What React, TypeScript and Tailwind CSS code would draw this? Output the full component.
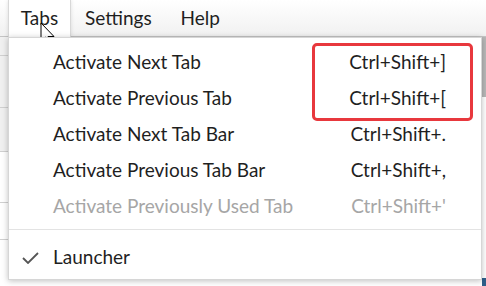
import React from 'react';

const items = [
  { label: 'Activate Next Tab', keys: 'Ctrl+Shift+]' },
  { label: 'Activate Previous Tab', keys: 'Ctrl+Shift+[' },
  { label: 'Activate Next Tab Bar', keys: 'Ctrl+Shift+.' },
  { label: 'Activate Previous Tab Bar', keys: 'Ctrl+Shift+,' },
  { label: 'Activate Previously Used Tab', keys: "Ctrl+Shift+'", disabled: true },
];

function Cursor() {
  return (
    <svg width="18" height="26" viewBox="0 0 18 26" className="absolute left-[40px] top-[22px]">
      <path d="M1 1 L1 19 L5.5 15 L9 23 L11.5 22 L8 14.5 L14 14.5 Z" fill="white" stroke="black" strokeWidth="1" strokeLinejoin="miter" />
    </svg>
  );
}

export default function App() {
  return (
    <div className="relative w-[486px] h-[286px] overflow-hidden bg-[#f5f5f5] font-['Lato','Noto_Sans',sans-serif] text-[#1f1f1f]">
      <div className="flex h-[37px] items-center border-b border-[#c4c4c4] bg-gradient-to-b from-white to-[#f1f1f1] pl-[8px] text-[19px]">
        <div className="flex h-[37px] w-[63px] items-center justify-center bg-white border-x border-[#d8d8d8] shadow-[0_0_4px_rgba(0,0,0,0.12)]">Tabs</div>
        <div className="pl-[14px]">Settings</div>
        <div className="pl-[29px]">Help</div>
      </div>

      <div className="flex h-[249px]">
        <div className="w-[8px] flex flex-col bg-[#f0f0f0]">
          <div className="h-[19px] border-b border-[#d0d0d0]" />
          <div className="h-[52px] border-b border-[#d0d0d0]" />
          <div className="h-[44px] border-b border-[#d0d0d0]" />
          <div className="h-[51px] border-b border-[#d0d0d0] bg-white" />
          <div className="h-[37px] border-b border-[#d0d0d0] bg-white" />
          <div className="flex-1 bg-white" />
        </div>
        <div className="flex-1 bg-white" />
        <div className="w-[4px] flex flex-col bg-white">
          <div className="h-[60px] bg-[#b8b8b8]" />
          <div className="flex-1" />
          <div className="h-[8px] bg-[#2f5f8a]" />
        </div>
      </div>

      <Cursor />

      <div className="absolute left-[8px] top-[37px] w-[474px] h-[243px] bg-white border border-[#d6d6d6] shadow-[0_1px_6px_rgba(0,0,0,0.25)] pt-[6px] text-[19px]">
        {items.map((it) => (
          <div key={it.label} className={`flex h-[36px] items-center pl-[44px] pr-[35px] ${it.disabled ? 'text-[#a6a6a6]' : ''}`}>
            <span className="flex-1">{it.label}</span>
            <span>{it.keys}</span>
          </div>
        ))}
        <div className="mt-[5px] mb-[9px] border-t border-[#e3e3e3]" />
        <div className="relative flex h-[36px] items-center pl-[44px]">
          <svg width="17" height="12" viewBox="0 0 17 12" className="absolute left-[13px] top-[13px]">
            <path d="M1 6 L6 11 L16 1" fill="none" stroke="#555" strokeWidth="1.8" />
          </svg>
          <span>Launcher</span>
        </div>
      </div>

      <div className="absolute left-[312px] top-[43px] w-[161px] h-[78px] border-[3px] border-[#e8383d] rounded-[5px]" />
    </div>
  );
}
